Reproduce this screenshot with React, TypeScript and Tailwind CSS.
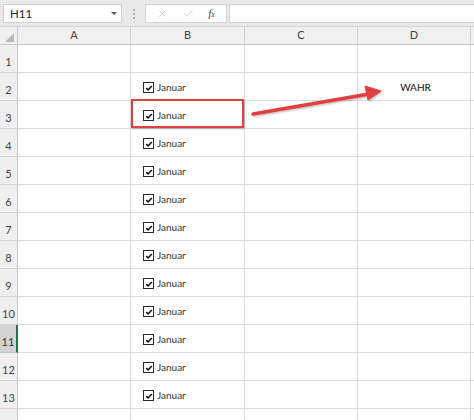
import { Check, X } from 'lucide-react';

const columns = ['A', 'B', 'C', 'D'];
const colWidths = ['w-[113px]', 'w-[114px]', 'w-[113px]', 'w-[113px]'];
const rows = Array.from({ length: 14 }, (_, i) => i + 1);

// rows that carry a checkbox in column B
const checkedRows = [2, 3, 4, 5, 6, 7, 8, 9, 10, 11, 12, 13];

function CheckBox() {
  return (
    <span className="flex h-[11px] w-[11px] items-center justify-center border border-[#2b2b2b] bg-white">
      <svg viewBox="0 0 10 10" className="h-[8px] w-[8px]">
        <path d="M1.6 5.2 L4 7.4 L8.4 2.4" fill="none" stroke="#111" strokeWidth="1.9" />
      </svg>
    </span>
  );
}

function Toolbar() {
  return (
    <div className="flex h-[27px] items-start border-b border-[#d6d6d6] bg-[#e9e9e9] pt-[4px]">
      <div className="ml-[3px] flex h-[19px] w-[119px] items-center justify-between border border-[#cfcfcf] bg-white pl-[6px] pr-[4px]">
        <span className="text-[11.5px] text-[#222]">H11</span>
        <span className="h-0 w-0 border-x-[3px] border-t-[3px] border-x-transparent border-t-[#555]" />
      </div>
      <div className="flex w-[23px] flex-col items-center gap-[2px] pt-[5px]">
        <span className="h-[2px] w-[2px] rounded-full bg-[#9a9a9a]" />
        <span className="h-[2px] w-[2px] rounded-full bg-[#9a9a9a]" />
        <span className="h-[2px] w-[2px] rounded-full bg-[#9a9a9a]" />
      </div>
      <div className="flex h-[19px] w-[82px] items-center justify-around border border-[#d4d4d4] bg-white px-[4px]">
        <X className="h-[11px] w-[11px] text-[#b5b5b5]" strokeWidth={1.5} />
        <Check className="h-[11px] w-[11px] text-[#b5b5b5]" strokeWidth={1.5} />
        <span className="font-['Liberation_Serif',serif] text-[11px] italic text-[#444]">
          f<span className="text-[8px]">x</span>
        </span>
      </div>
      <div className="ml-[2px] h-[19px] flex-1 border border-r-0 border-[#d4d4d4] bg-white" />
    </div>
  );
}

function HeaderRow() {
  return (
    <div className="flex h-[18px] border-b border-[#c8c8c8] bg-[#f0f0f0]">
      <div className="relative w-[18px] border-r border-[#c8c8c8]">
        <span className="absolute bottom-[2px] right-[3px] h-0 w-0 border-b-[9px] border-l-[9px] border-b-[#b9b9b9] border-l-transparent" />
      </div>
      {columns.map((c, i) => (
        <div
          key={c}
          className={`${colWidths[i]} flex items-center justify-center border-r border-[#d0d0d0] text-[11px] text-[#444]`}
        >
          {c}
        </div>
      ))}
      <div className="flex-1" />
    </div>
  );
}

function SheetRow({ n }: { n: number }) {
  const selected = n === 11;
  // the last row is only partly on screen, its number sits below the edge
  const label = n < 14 ? n : '';
  return (
    <div className="flex h-[28px] shrink-0">
      <div
        className={`flex w-[18px] items-end justify-center border-b pb-[2px] text-[11px] ${
          selected
            ? 'border-r-2 border-b-[#c4c4c4] border-r-[#217346] bg-[#d3d3d3] text-[#333]'
            : 'border-r border-b-[#d6d6d6] border-r-[#c8c8c8] bg-[#efefef] text-[#444]'
        }`}
      >
        {label}
      </div>
      <div className="w-[113px] border-b border-r border-[#dadada]" />
      <div className="flex w-[114px] items-center gap-[3px] border-b border-r border-[#dadada] pl-[12px] pt-[2px]">
        {checkedRows.includes(n) && (
          <>
            <CheckBox />
            <span className="text-[10px] text-[#333]">Januar</span>
          </>
        )}
      </div>
      <div className="w-[113px] border-b border-r border-[#dadada]" />
      <div className="flex w-[113px] items-center justify-center border-b border-r border-[#dadada] pl-[3px] pt-[1px]">
        {n === 2 && <span className="text-[10px] font-medium text-[#222]">WAHR</span>}
      </div>
      <div className="flex-1 border-b border-[#dadada]" />
    </div>
  );
}

export default function App() {
  return (
    <div className="relative h-[420px] w-[474px] overflow-hidden bg-white font-['Lato','Noto_Sans',sans-serif]">
      <Toolbar />
      <HeaderRow />
      <div className="flex flex-col">
        {rows.map((n) => (
          <SheetRow key={n} n={n} />
        ))}
      </div>

      {/* highlight around B3 */}
      <div className="absolute left-[131px] top-[99px] h-[29px] w-[113px] border-2 border-[#e23f3f] shadow-[1px_1px_2px_rgba(0,0,0,0.25)]" />

      {/* arrow pointing at the result */}
      <svg className="absolute left-0 top-0" width="474" height="420" viewBox="0 0 474 420">
        <defs>
          <filter id="drop" x="-10%" y="-50%" width="120%" height="200%">
            <feDropShadow dx="1" dy="1" stdDeviation="0.8" floodColor="#000" floodOpacity="0.3" />
          </filter>
        </defs>
        <g filter="url(#drop)" fill="#e23f3f" stroke="#e23f3f">
          <line x1="253" y1="114" x2="369" y2="94" strokeWidth="3.5" strokeLinecap="round" />
          <polygon points="381,91 365,86 368,100" strokeWidth="1" strokeLinejoin="round" />
        </g>
      </svg>
    </div>
  );
}
